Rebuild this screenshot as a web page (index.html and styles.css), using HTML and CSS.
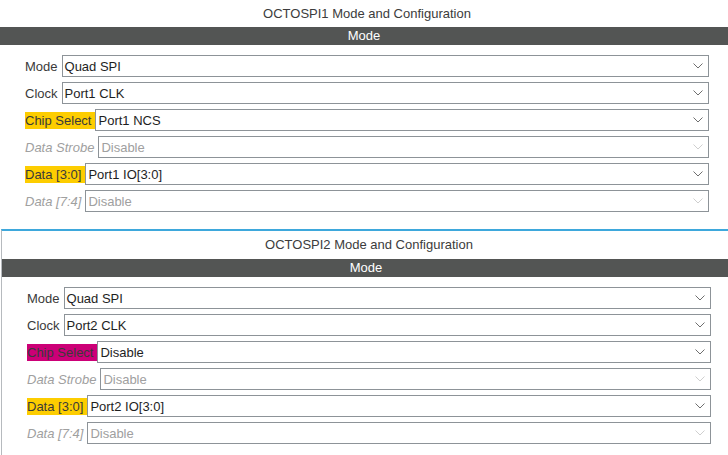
FILE: index.html
```html
<!DOCTYPE html>
<html>
<head>
<meta charset="utf-8">
<link rel="stylesheet" href="styles.css">
</head>
<body>
<div class="panel p1">
  <div class="title">OCTOSPI1 Mode and Configuration</div>
  <div class="bar">Mode</div>
  <div class="rows">
    <div class="row"><span class="lbl">Mode</span><div class="sel"><span class="val">Quad SPI</span><svg class="chev" viewBox="0 0 10 6" width="10" height="6"><polyline points="0.5,0.5 5,5 9.5,0.5"/></svg></div></div>
    <div class="row"><span class="lbl">Clock</span><div class="sel"><span class="val">Port1 CLK</span><svg class="chev" viewBox="0 0 10 6" width="10" height="6"><polyline points="0.5,0.5 5,5 9.5,0.5"/></svg></div></div>
    <div class="row"><span class="lbl hl-yellow">Chip Select</span><div class="sel"><span class="val">Port1 NCS</span><svg class="chev" viewBox="0 0 10 6" width="10" height="6"><polyline points="0.5,0.5 5,5 9.5,0.5"/></svg></div></div>
    <div class="row disabled"><span class="lbl">Data Strobe</span><div class="sel"><span class="val">Disable</span><svg class="chev" viewBox="0 0 10 6" width="10" height="6"><polyline points="0.5,0.5 5,5 9.5,0.5"/></svg></div></div>
    <div class="row"><span class="lbl hl-yellow">Data [3:0]</span><div class="sel"><span class="val">Port1 IO[3:0]</span><svg class="chev" viewBox="0 0 10 6" width="10" height="6"><polyline points="0.5,0.5 5,5 9.5,0.5"/></svg></div></div>
    <div class="row disabled"><span class="lbl">Data [7:4]</span><div class="sel"><span class="val">Disable</span><svg class="chev" viewBox="0 0 10 6" width="10" height="6"><polyline points="0.5,0.5 5,5 9.5,0.5"/></svg></div></div>
  </div>
</div>
<div class="panel p2">
  <div class="title">OCTOSPI2 Mode and Configuration</div>
  <div class="bar">Mode</div>
  <div class="rows">
    <div class="row"><span class="lbl">Mode</span><div class="sel"><span class="val">Quad SPI</span><svg class="chev" viewBox="0 0 10 6" width="10" height="6"><polyline points="0.5,0.5 5,5 9.5,0.5"/></svg></div></div>
    <div class="row"><span class="lbl">Clock</span><div class="sel"><span class="val">Port2 CLK</span><svg class="chev" viewBox="0 0 10 6" width="10" height="6"><polyline points="0.5,0.5 5,5 9.5,0.5"/></svg></div></div>
    <div class="row"><span class="lbl hl-magenta">Chip Select</span><div class="sel"><span class="val">Disable</span><svg class="chev" viewBox="0 0 10 6" width="10" height="6"><polyline points="0.5,0.5 5,5 9.5,0.5"/></svg></div></div>
    <div class="row disabled"><span class="lbl">Data Strobe</span><div class="sel"><span class="val">Disable</span><svg class="chev" viewBox="0 0 10 6" width="10" height="6"><polyline points="0.5,0.5 5,5 9.5,0.5"/></svg></div></div>
    <div class="row"><span class="lbl hl-yellow">Data [3:0]</span><div class="sel"><span class="val">Port2 IO[3:0]</span><svg class="chev" viewBox="0 0 10 6" width="10" height="6"><polyline points="0.5,0.5 5,5 9.5,0.5"/></svg></div></div>
    <div class="row disabled"><span class="lbl">Data [7:4]</span><div class="sel"><span class="val">Disable</span><svg class="chev" viewBox="0 0 10 6" width="10" height="6"><polyline points="0.5,0.5 5,5 9.5,0.5"/></svg></div></div>
  </div>
</div>
</body>
</html>
```
FILE: styles.css
```css
html, body {
  margin: 0;
  padding: 0;
  background: #ffffff;
  overflow: hidden;
  width: 728px;
  height: 455px;
}
body {
  font-family: "Liberation Sans", Arial, sans-serif;
  font-size: 13px;
  color: #3a3a3a;
}
.panel {
  width: 728px;
  display: flex;
  flex-direction: column;
}
.p1 {
  padding-bottom: 17px;
}
.p2 {
  margin-left: 1px;
  border-top: 2px solid #3ea8dc;
  border-left: 1px solid #b6babe;
  height: 240px;
}
.title {
  height: 27px;
  line-height: 27px;
  text-align: center;
  padding-left: 6px;
  color: #3c3c3c;
}
.p2 .title {
  height: 28px;
  line-height: 28px;
}
.bar {
  height: 18px;
  line-height: 18px;
  background: #535554;
  color: #ffffff;
  text-align: center;
}
.rows {
  display: flex;
  flex-direction: column;
  gap: 5px;
  padding: 10px 19px 0 25px;
}
.row {
  display: flex;
  align-items: center;
  height: 22px;
}
.lbl {
  line-height: 17px;
  height: 17px;
  padding-right: 4px;
  white-space: nowrap;
  color: #3a3a3a;
}
.hl-yellow {
  background: #fdcd00;
}
.hl-magenta {
  background: #cc0077;
}
.sel {
  flex: 1;
  height: 22px;
  box-sizing: border-box;
  border: 1px solid #8d9398;
  display: flex;
  align-items: center;
  padding-left: 2px;
  padding-right: 5px;
}
.val {
  flex: 1;
  color: #1e1e1e;
  white-space: nowrap;
}
.chev {
  display: block;
}
.chev polyline {
  fill: none;
  stroke: #6e6e6e;
  stroke-width: 1;
}
.disabled .lbl {
  font-style: italic;
  color: #a0a0a0;
}
.disabled .val {
  color: #a0a0a0;
}
.disabled .chev polyline {
  stroke: #cfcfcf;
}
```
